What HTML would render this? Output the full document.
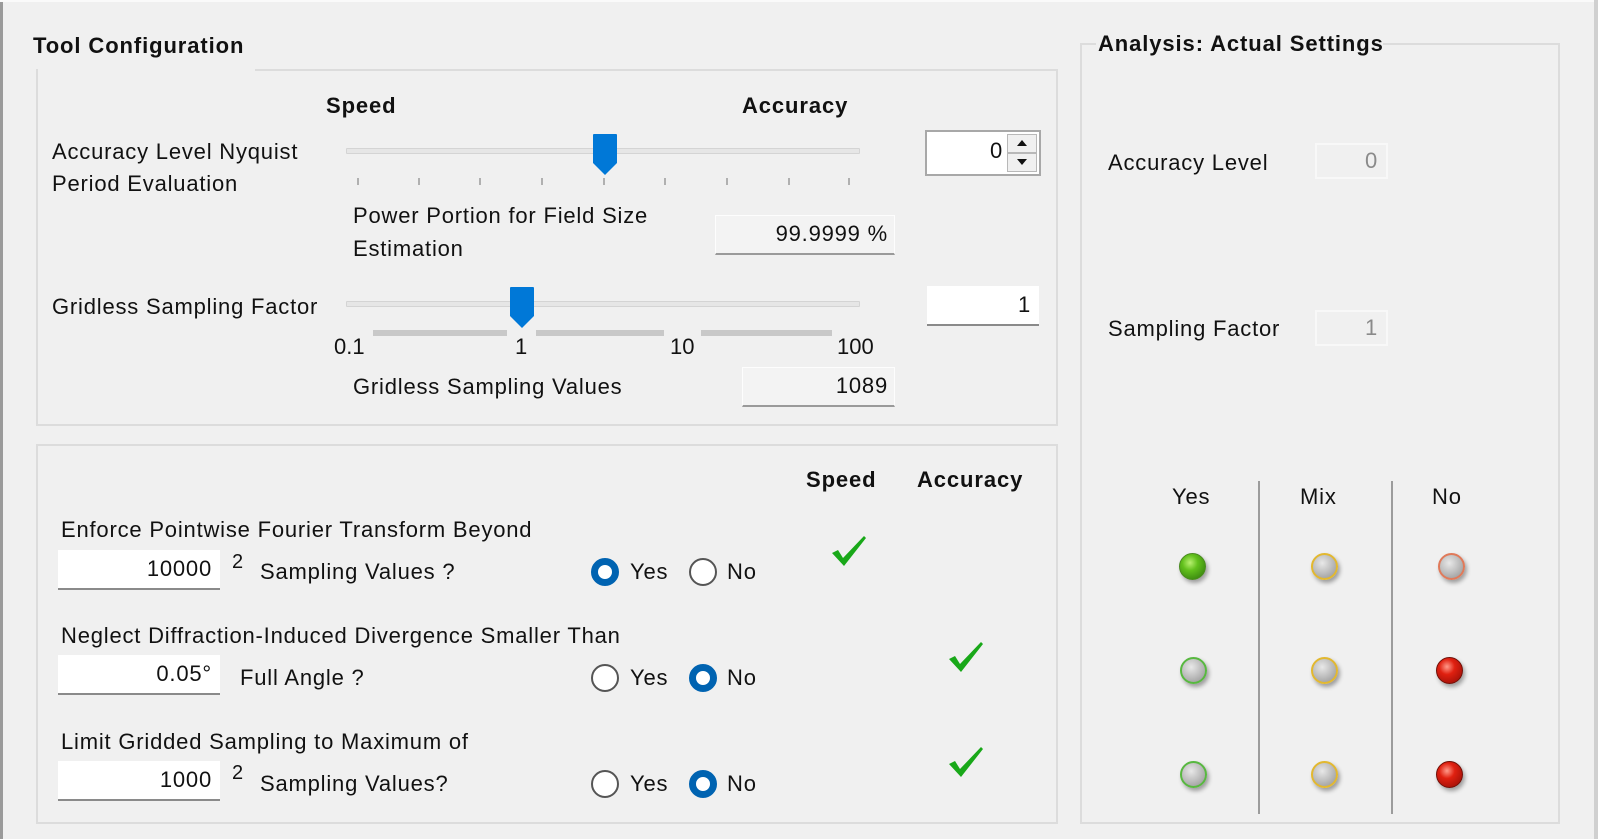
<!DOCTYPE html>
<html><head><meta charset="utf-8"><style>
*{margin:0;padding:0;box-sizing:border-box}
body{width:1598px;height:839px;background:#f0f0f0;position:relative;overflow:hidden;font-family:"Liberation Sans",Arial,sans-serif;color:#111;font-size:22px;letter-spacing:0.8px}
.a{position:absolute;white-space:nowrap}
.t{position:absolute;white-space:nowrap;height:30px;line-height:30px}
.b{font-weight:bold;letter-spacing:0.9px}
.gb{position:absolute;border:2px solid #dcdcdc}
.track{position:absolute;height:6px;background:#e6e6e6;border:1px solid #d4d4d4;border-radius:1px}
.tick{position:absolute;width:2px;height:7px;background:#b0b0b0}
.rb{position:absolute;height:6px;background:#c8c8c8}
.fw{position:absolute;background:#fff;border-bottom:2px solid #8a8a8a;text-align:right;padding-right:8px;line-height:38px}
.fr{position:absolute;background:#f3f3f3;border:1px solid #fdfdfd;border-bottom:2px solid #9a9a9a;text-align:right;padding-right:6px;line-height:36px}
.fd{position:absolute;background:#f0f0f0;border:2px solid #f8f8f8;text-align:right;padding-right:8px;color:#8a8a8a;line-height:31px}
.r{position:absolute;width:28px;height:28px;border-radius:50%;border:2px solid #555;background:#fff}
.r.on{border:7px solid #0063b1;background:#fff}
.led{position:absolute;width:27px;height:27px;border-radius:50%;box-shadow:2px 3px 4px rgba(0,0,0,.35)}
.vl{position:absolute;width:2px;background:#9c9c9c}
.sup{position:absolute;font-size:20px;letter-spacing:0}
</style></head><body>
<div class="a" style="left:0;top:0;width:3px;height:839px;background:#9a9a9a"></div>
<div class="a" style="left:0;top:0;width:1598px;height:2px;background:#fafafa"></div>
<div class="a" style="left:1594px;top:0;width:4px;height:839px;background:#d0d0d0"></div>

<!-- Group 1 -->
<div class="gb" style="left:36px;top:69px;width:1022px;height:357px;border-top:none"></div>
<div class="a" style="left:255px;top:69px;width:803px;height:2px;background:#dcdcdc"></div>
<div class="t b" style="left:33px;top:31px;font-size:22px">Tool Configuration</div>

<div class="t b" style="left:326px;top:91px">Speed</div>
<div class="t b" style="left:742px;top:91px">Accuracy</div>

<div class="t" style="left:52px;top:137px">Accuracy&nbsp;Level&nbsp;Nyquist</div>
<div class="t" style="left:52px;top:169px">Period Evaluation</div>

<div class="track" style="left:346px;top:148px;width:514px"></div>
<div class="tick" style="left:357px;top:178px"></div>
<div class="tick" style="left:418px;top:178px"></div>
<div class="tick" style="left:479px;top:178px"></div>
<div class="tick" style="left:541px;top:178px"></div>
<div class="tick" style="left:603px;top:178px"></div>
<div class="tick" style="left:664px;top:178px"></div>
<div class="tick" style="left:726px;top:178px"></div>
<div class="tick" style="left:788px;top:178px"></div>
<div class="tick" style="left:848px;top:178px"></div>
<svg class="a" style="left:593px;top:134px" width="24" height="42"><path d="M0 1 Q0 0 1 0 H23 Q24 0 24 1 V29 L12 41 L0 29 Z" fill="#0078d7"/></svg>

<div class="a" style="left:925px;top:130px;width:116px;height:46px;border:2px solid #a8a8a8;background:#fff"></div>
<div class="a" style="left:990px;top:133px;font-size:22px;line-height:36px">0</div>
<div class="a" style="left:1007px;top:134px;width:30px;height:19px;border:1px solid #b8b8b8;background:#f0f0f0"></div>
<div class="a" style="left:1007px;top:153px;width:30px;height:19px;border:1px solid #b8b8b8;background:#f0f0f0"></div>
<svg class="a" style="left:1007px;top:134px" width="30" height="38"><path d="M10 12 L15 6 L20 12Z M10 25 L15 31 L20 25Z" fill="#111"/></svg>

<div class="t" style="left:353px;top:201px">Power Portion for Field Size</div>
<div class="t" style="left:353px;top:234px">Estimation</div>
<div class="fr" style="left:715px;top:215px;width:180px;height:40px">99.9999 %</div>

<div class="t" style="left:52px;top:292px">Gridless Sampling Factor</div>
<div class="track" style="left:346px;top:301px;width:514px"></div>
<svg class="a" style="left:510px;top:287px" width="24" height="42"><path d="M0 1 Q0 0 1 0 H23 Q24 0 24 1 V29 L12 41 L0 29 Z" fill="#0078d7"/></svg>
<div class="rb" style="left:373px;top:330px;width:134px"></div>
<div class="rb" style="left:536px;top:330px;width:128px"></div>
<div class="rb" style="left:701px;top:330px;width:131px"></div>
<div class="t" style="left:334px;top:332px;letter-spacing:0">0.1</div>
<div class="t" style="left:515px;top:332px;letter-spacing:0">1</div>
<div class="t" style="left:670px;top:332px;letter-spacing:0">10</div>
<div class="t" style="left:837px;top:332px;letter-spacing:0">100</div>
<div class="fw" style="left:927px;top:286px;width:112px;height:40px">1</div>

<div class="t" style="left:353px;top:372px">Gridless Sampling Values</div>
<div class="fr" style="left:742px;top:367px;width:153px;height:40px">1089</div>

<!-- Group 2 -->
<div class="gb" style="left:36px;top:444px;width:1022px;height:380px"></div>
<div class="t b" style="left:806px;top:465px">Speed</div>
<div class="t b" style="left:917px;top:465px">Accuracy</div>

<div class="t" style="left:61px;top:515px">Enforce Pointwise Fourier Transform Beyond</div>
<div class="fw" style="left:58px;top:550px;width:162px;height:40px">10000</div>
<div class="sup" style="left:232px;top:551px">2</div>
<div class="t" style="left:260px;top:557px">Sampling Values ?</div>
<div class="r on" style="left:591px;top:558px"></div>
<div class="t" style="left:630px;top:557px">Yes</div>
<div class="r" style="left:689px;top:558px"></div>
<div class="t" style="left:727px;top:557px">No</div>
<svg class="a" style="left:830px;top:533px" width="38" height="36"><path d="M2 20 L8 17 L13 25 L34 3 L36 5 L14 33 Z" fill="#19a819"/></svg>

<div class="t" style="left:61px;top:621px">Neglect Diffraction-Induced Divergence Smaller Than</div>
<div class="fw" style="left:58px;top:655px;width:162px;height:40px">0.05°</div>
<div class="t" style="left:240px;top:663px">Full Angle ?</div>
<div class="r" style="left:591px;top:664px"></div>
<div class="t" style="left:630px;top:663px">Yes</div>
<div class="r on" style="left:689px;top:664px"></div>
<div class="t" style="left:727px;top:663px">No</div>
<svg class="a" style="left:947px;top:639px" width="38" height="36"><path d="M2 20 L8 17 L13 25 L34 3 L36 5 L14 33 Z" fill="#19a819"/></svg>

<div class="t" style="left:61px;top:727px">Limit Gridded Sampling to Maximum of</div>
<div class="fw" style="left:58px;top:761px;width:162px;height:40px">1000</div>
<div class="sup" style="left:232px;top:762px">2</div>
<div class="t" style="left:260px;top:769px">Sampling Values?</div>
<div class="r" style="left:591px;top:770px"></div>
<div class="t" style="left:630px;top:769px">Yes</div>
<div class="r on" style="left:689px;top:770px"></div>
<div class="t" style="left:727px;top:769px">No</div>
<svg class="a" style="left:947px;top:744px" width="38" height="36"><path d="M2 20 L8 17 L13 25 L34 3 L36 5 L14 33 Z" fill="#19a819"/></svg>

<!-- Group 3 -->
<div class="gb" style="left:1080px;top:43px;width:480px;height:781px;border-top:none"></div>
<div class="a" style="left:1080px;top:43px;width:16px;height:2px;background:#dcdcdc"></div>
<div class="a" style="left:1383px;top:43px;width:177px;height:2px;background:#dcdcdc"></div>
<div class="t b" style="left:1098px;top:29px">Analysis: Actual Settings</div>

<div class="t" style="left:1108px;top:148px">Accuracy Level</div>
<div class="fd" style="left:1315px;top:143px;width:73px;height:36px">0</div>
<div class="t" style="left:1108px;top:314px">Sampling Factor</div>
<div class="fd" style="left:1315px;top:310px;width:73px;height:36px">1</div>

<div class="t" style="left:1172px;top:482px">Yes</div>
<div class="t" style="left:1300px;top:482px">Mix</div>
<div class="t" style="left:1432px;top:482px">No</div>
<div class="vl" style="left:1258px;top:481px;height:333px"></div>
<div class="vl" style="left:1391px;top:481px;height:333px"></div>

<div class="led" style="left:1179px;top:553px;background:radial-gradient(circle at 40% 35%,#b8f070 0,#62c01c 35%,#3c8a10 80%);border:1px solid #4a8a20"></div>
<div class="led" style="left:1311px;top:553px;background:radial-gradient(circle at 40% 35%,#e8e8e8 0,#bdbdbd 50%,#9a9a9a 90%);border:2px solid #e2b830"></div>
<div class="led" style="left:1438px;top:553px;background:radial-gradient(circle at 40% 35%,#e8e8e8 0,#bdbdbd 50%,#9a9a9a 90%);border:2px solid #e07a5a"></div>

<div class="led" style="left:1180px;top:657px;background:radial-gradient(circle at 40% 35%,#e8e8e8 0,#bdbdbd 50%,#9a9a9a 90%);border:2px solid #58b840"></div>
<div class="led" style="left:1311px;top:657px;background:radial-gradient(circle at 40% 35%,#e8e8e8 0,#bdbdbd 50%,#9a9a9a 90%);border:2px solid #e2b830"></div>
<div class="led" style="left:1436px;top:657px;background:radial-gradient(circle at 40% 35%,#ff9a8a 0,#e02010 35%,#a01008 85%);border:1px solid #701008"></div>

<div class="led" style="left:1180px;top:761px;background:radial-gradient(circle at 40% 35%,#e8e8e8 0,#bdbdbd 50%,#9a9a9a 90%);border:2px solid #58b840"></div>
<div class="led" style="left:1311px;top:761px;background:radial-gradient(circle at 40% 35%,#e8e8e8 0,#bdbdbd 50%,#9a9a9a 90%);border:2px solid #e2b830"></div>
<div class="led" style="left:1436px;top:761px;background:radial-gradient(circle at 40% 35%,#ff9a8a 0,#e02010 35%,#a01008 85%);border:1px solid #701008"></div>
</body></html>
